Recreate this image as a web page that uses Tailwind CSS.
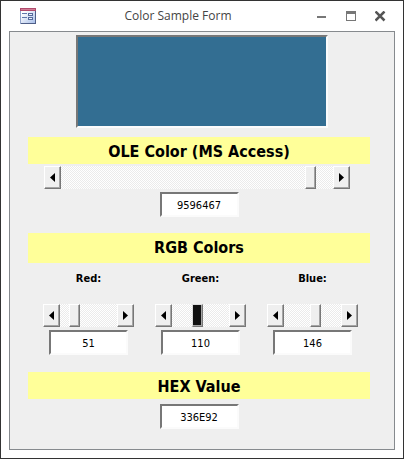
<!DOCTYPE html>
<html lang="en">
<head>
  <meta charset="UTF-8">
  <meta name="viewport" content="width=device-width, initial-scale=1.0">
  <title>Color Sample Form</title>
  <script src="https://cdn.jsdelivr.net/npm/@tailwindcss/browser@4"></script>
  <style>
    body {
      font-family: 'DejaVu Sans Condensed', 'DejaVu Sans', sans-serif;
    }
    .titlebar {
      font-family: 'Open Sans', 'Noto Sans', sans-serif;
    }
    .sunken {
      border: 2px solid;
      border-color: #777 #fbfbfb #fbfbfb #777;
    }
    .raised {
      background: #efefef;
      border: 1px solid;
      border-color: #fff #777 #777 #fff;
      box-shadow: inset -1px -1px 0 #a5a5a5;
    }
    .scroll {
      background: repeating-conic-gradient(#fff 0 25%, #ebebeb 0 50%) 0 0 / 2px 2px;
    }
    .scroll input {
      appearance: none;
      background: transparent;
      outline: none;
    }
    .scroll input::-webkit-slider-thumb {
      appearance: none;
      width: 11px;
      height: 23px;
      background: #efefef;
      border: 1px solid;
      border-color: #fff #777 #777 #fff;
      box-shadow: inset -1px -1px 0 #a5a5a5;
    }
    /* the slider that has the focus */
    .scroll input.active::-webkit-slider-thumb {
      background: #111;
      border-color: #ddd #777 #777 #ddd;
    }
  </style>
</head>
<body class="bg-white text-black">
  <div class="min-h-screen flex flex-col border border-[#333] bg-white px-2 pb-2">
    <!-- Title bar -->
    <header class="titlebar flex items-center h-[30px] pl-[11px] text-[#444]">
      <svg class="w-4 h-4 shrink-0" viewBox="0 0 16 16" shape-rendering="crispEdges">
        <defs>
          <linearGradient id="ico" x1="0" y1="0" x2="1" y2="1">
            <stop offset="0.2" stop-color="#fff"/>
            <stop offset="1" stop-color="#a4bce8"/>
          </linearGradient>
        </defs>
        <rect x="0.5" y="1.5" width="15" height="14" fill="url(#ico)" stroke="#93a6cc"/>
        <path d="M15.500 3v12.500H1" fill="none" stroke="#4f5f88"/>
        <rect x="0" y="0" width="16" height="3" fill="#b04a6c"/>
        <rect x="1" y="1" width="14" height="1" fill="#d27b95"/>
        <path d="M2 5.500h5M2 9.500h5" stroke="#5f78ab"/>
        <rect x="8.500" y="5.500" width="4" height="2" fill="#e9effa" stroke="#566b9c"/>
        <rect x="8.500" y="9.500" width="4" height="2" fill="#e9effa" stroke="#566b9c"/>
      </svg>
      <h1 class="flex-1 pl-3 text-center text-[12px] leading-4">Color Sample Form</h1>
      <button type="button" aria-label="Minimize" class="w-[29px] h-7 flex items-center justify-center">
        <svg class="w-[11px] h-[11px]" viewBox="0 0 11 11" shape-rendering="crispEdges"><rect x="0" y="5" width="9" height="2" fill="#777"/></svg>
      </button>
      <button type="button" aria-label="Maximize" class="w-[29px] h-7 flex items-center justify-center">
        <svg class="w-[11px] h-[11px]" viewBox="0 0 11 11" shape-rendering="crispEdges"><path d="M0.500 0v9.500h9V0" fill="none" stroke="#777"/><rect width="10" height="3" fill="#777"/></svg>
      </button>
      <button type="button" aria-label="Close" class="w-[29px] h-7 flex items-center justify-center">
        <svg class="w-[11px] h-[11px]" viewBox="0 0 11 11"><path d="M0.500 0.500l9 9M9.500 0.500l-9 9" stroke="#555" stroke-width="2.500"/></svg>
      </button>
    </header>

    <!-- Form -->
    <main class="flex-1 border border-[#868a8e] bg-[#efefef] pt-[3px] pb-5">
      <div id="swatch" class="sunken mx-auto w-[252px] h-[93px] bg-[#336e92]"></div>

      <div class="mt-[9px] ml-[18px] mr-6">
        <section>
          <h2 class="bg-[#ffff99] pt-[2px] text-center text-[16px] font-bold leading-[25px]"><label for="ole">OLE Color (MS Access)</label></h2>
          <div class="scroll flex h-[23px] mt-[2px] ml-4 mr-5">
            <button type="button" aria-label="Decrease OLE color" class="raised w-[17px] shrink-0 flex items-center justify-center">
              <svg class="w-[5px] h-[9px]" viewBox="0 0 5 9"><path d="M5 0v9L0 4.500z"/></svg>
            </button>
            <input type="range" aria-label="OLE color" min="0" max="10263000" value="9596467" class="flex-1 min-w-0">
            <button type="button" aria-label="Increase OLE color" class="raised w-[17px] shrink-0 flex items-center justify-center">
              <svg class="w-[5px] h-[9px]" viewBox="0 0 5 9"><path d="M0 0v9l5-4.500z"/></svg>
            </button>
          </div>
          <input id="ole" type="text" value="9596467" class="sunken block mx-auto mt-[3px] w-[79px] h-[25px] pt-[2px] bg-white text-center text-[11px]">
        </section>

        <section class="mt-4">
          <h2 class="bg-[#ffff99] text-center text-[16px] font-bold leading-[30px]">RGB Colors</h2>
          <div class="flex justify-between mt-2 pl-[15px] pr-3">
            <div class="w-[91px]">
              <label for="red" class="block text-center text-[11px] font-bold leading-4">Red:</label>
              <div class="scroll flex h-[23px] mt-[17px]">
                <button type="button" aria-label="Decrease red" class="raised w-[17px] shrink-0 flex items-center justify-center">
                  <svg class="w-[5px] h-[9px]" viewBox="0 0 5 9"><path d="M5 0v9L0 4.500z"/></svg>
                </button>
                <input type="range" aria-label="Red" min="0" max="255" value="51" class="flex-1 min-w-0">
                <button type="button" aria-label="Increase red" class="raised w-[17px] shrink-0 flex items-center justify-center">
                  <svg class="w-[5px] h-[9px]" viewBox="0 0 5 9"><path d="M0 0v9l5-4.500z"/></svg>
                </button>
              </div>
              <input id="red" type="text" value="51" class="sunken block mx-auto mt-[3px] w-[79px] h-[25px] pt-[2px] bg-white text-center text-[11px]">
            </div>
            <div class="w-[91px]">
              <label for="green" class="block text-center text-[11px] font-bold leading-4">Green:</label>
              <div class="scroll flex h-[23px] mt-[17px]">
                <button type="button" aria-label="Decrease green" class="raised w-[17px] shrink-0 flex items-center justify-center">
                  <svg class="w-[5px] h-[9px]" viewBox="0 0 5 9"><path d="M5 0v9L0 4.500z"/></svg>
                </button>
                <input type="range" aria-label="Green" min="0" max="255" value="110" class="active flex-1 min-w-0">
                <button type="button" aria-label="Increase green" class="raised w-[17px] shrink-0 flex items-center justify-center">
                  <svg class="w-[5px] h-[9px]" viewBox="0 0 5 9"><path d="M0 0v9l5-4.500z"/></svg>
                </button>
              </div>
              <input id="green" type="text" value="110" class="sunken block mx-auto mt-[3px] w-[79px] h-[25px] pt-[2px] bg-white text-center text-[11px]">
            </div>
            <div class="w-[91px]">
              <label for="blue" class="block text-center text-[11px] font-bold leading-4">Blue:</label>
              <div class="scroll flex h-[23px] mt-[17px]">
                <button type="button" aria-label="Decrease blue" class="raised w-[17px] shrink-0 flex items-center justify-center">
                  <svg class="w-[5px] h-[9px]" viewBox="0 0 5 9"><path d="M5 0v9L0 4.500z"/></svg>
                </button>
                <input type="range" aria-label="Blue" min="0" max="255" value="146" class="flex-1 min-w-0">
                <button type="button" aria-label="Increase blue" class="raised w-[17px] shrink-0 flex items-center justify-center">
                  <svg class="w-[5px] h-[9px]" viewBox="0 0 5 9"><path d="M0 0v9l5-4.500z"/></svg>
                </button>
              </div>
              <input id="blue" type="text" value="146" class="sunken block mx-auto mt-[3px] w-[79px] h-[25px] pt-[2px] bg-white text-center text-[11px]">
            </div>
          </div>
        </section>

        <section class="mt-[17px]">
          <h2 class="bg-[#ffff99] pt-[2px] text-center text-[16px] font-bold leading-[25px]"><label for="hex">HEX Value</label></h2>
          <input id="hex" type="text" value="336E92" class="sunken block mx-auto mt-[5px] w-[79px] h-[25px] pt-[2px] bg-white text-center text-[11px]">
        </section>
      </div>
    </main>
  </div>
</body>
</html>
